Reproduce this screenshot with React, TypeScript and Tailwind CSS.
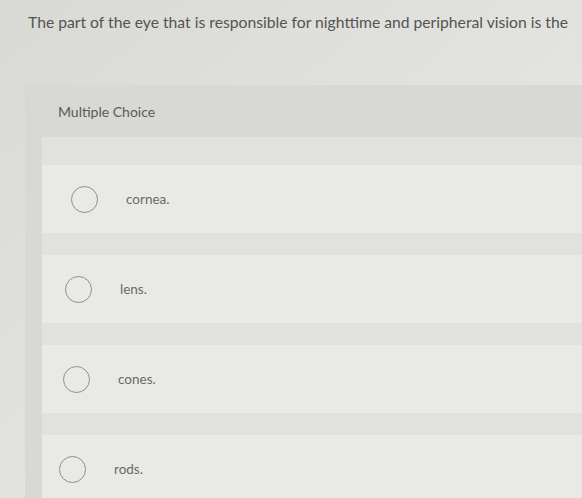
const options = [
  { label: "cornea.", pad: "pl-[29px]" },
  { label: "lens.", pad: "pl-[23px]" },
  { label: "cones.", pad: "pl-[21px]" },
  { label: "rods.", pad: "pl-[17px]" },
];

export default function App() {
  return (
    <div
      className="h-[498px] w-[582px] overflow-hidden bg-gradient-to-br from-[#d9d9d6] via-[#e2e2df] to-[#e9e9e6] text-[#555553]"
      style={{ fontFamily: "Lato, 'Open Sans', sans-serif" }}
    >
      <p className="pl-[28px] pt-[13px] text-[15.7px] leading-[18px] text-[#545452]">
        The part of the eye that is responsible for nighttime and peripheral vision is the
      </p>

      <div className="ml-[25px] mt-[54px] bg-[#d8d8d5] pl-[17px]">
        <div className="flex h-[52px] items-center pl-[16px] text-[14px] text-[#5a5a58]">
          Multiple Choice
        </div>
        <div className="flex flex-col gap-[22px] bg-[#e1e1de] pt-[28px]">
          {options.map((o) => (
            <div
              key={o.label}
              className={`flex h-[68px] items-center gap-[28px] ${o.pad} bg-[#e9e9e6]`}
            >
              <span className="block h-[27px] w-[27px] rounded-full border-[1.5px] border-[#8e8e8c]" />
              <span className="text-[13.5px] text-[#6a6a68]">{o.label}</span>
            </div>
          ))}
        </div>
      </div>
    </div>
  );
}
